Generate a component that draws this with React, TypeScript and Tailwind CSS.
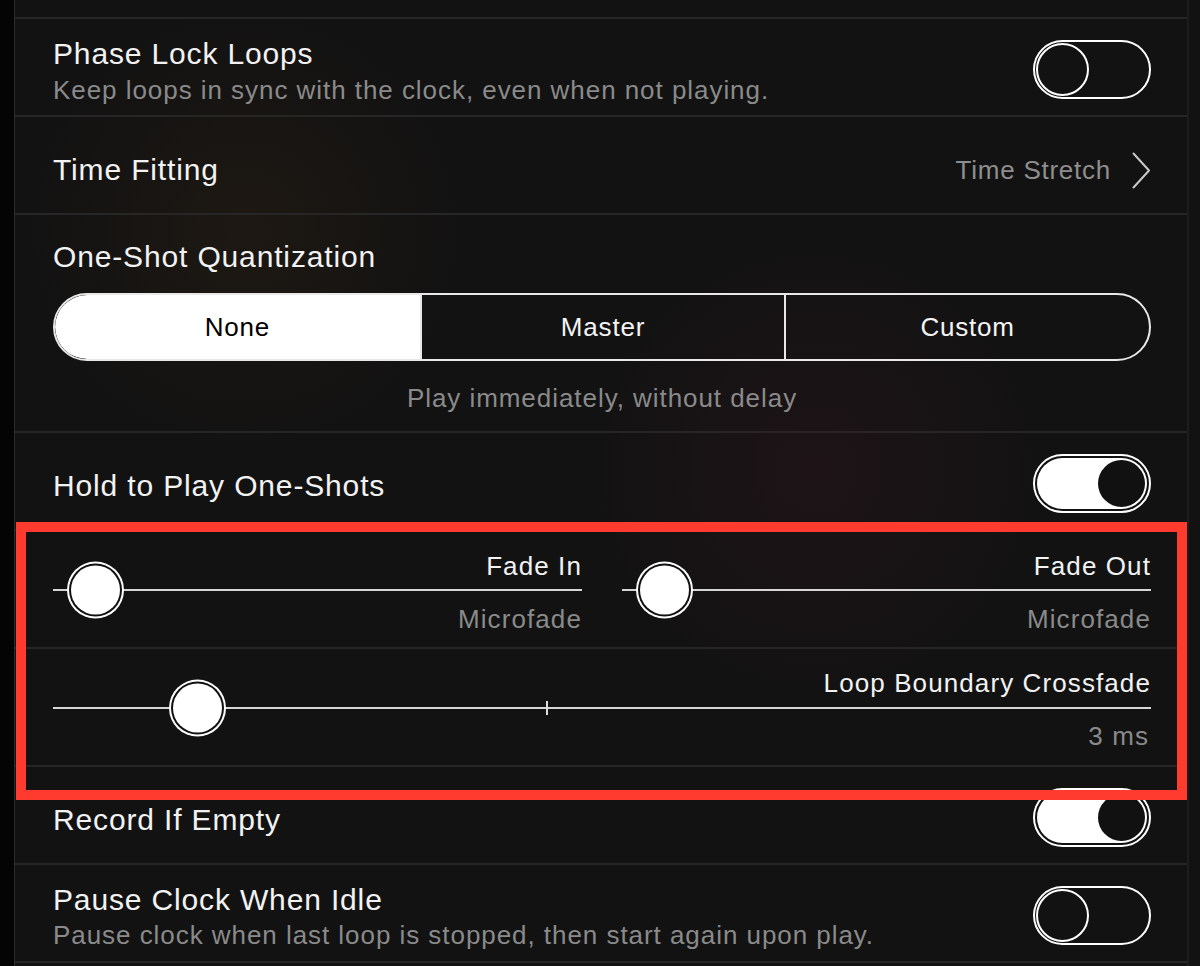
import React from "react";

const titleCls = "text-[30px] leading-[34px] tracking-[0.85px] text-[#f2f2f2] whitespace-nowrap";
const subCls = "text-[26px] leading-[30px] tracking-[0.95px] text-[#8a8a8a] whitespace-nowrap";
const labelCls = "text-right text-[26px] leading-[30px] tracking-[1.1px] text-[#f2f2f2] whitespace-nowrap";
const valueCls = "text-right text-[26px] leading-[30px] tracking-[1.1px] text-[#8a8a8a] whitespace-nowrap";

function ToggleOn() {
  return (
    <div className="w-[118px] h-[59px] rounded-full border-2 border-white p-[2px] shrink-0">
      <div className="h-full w-full rounded-full bg-white flex items-center justify-end p-[2px]">
        <div className="w-[47px] h-[47px] rounded-full bg-[#111111]" />
      </div>
    </div>
  );
}

function ToggleOff() {
  return (
    <div className="w-[118px] h-[59px] rounded-full border-2 border-white p-[1px] flex items-center shrink-0">
      <div className="w-[53px] h-[53px] rounded-full border-2 border-white" />
    </div>
  );
}

function Knob({ left }: { left: string }) {
  return (
    <div
      className={`absolute top-1/2 -translate-y-1/2 w-[57px] h-[57px] rounded-full bg-white p-[2px] ${left}`}
    >
      <div className="w-full h-full rounded-full bg-[#111111] p-[2px]">
        <div className="w-full h-full rounded-full bg-white" />
      </div>
    </div>
  );
}

function Chevron() {
  return (
    <svg width="19" height="37" viewBox="0 0 19 37" fill="none">
      <path d="M1.5 1.5 L17 18.5 L1.5 35.5" stroke="#c8c8c8" strokeWidth="2" strokeLinecap="round" strokeLinejoin="round" />
    </svg>
  );
}

export default function App() {
  return (
    <div className="relative w-[1200px] h-[966px] overflow-hidden bg-[#121212] flex font-['Liberation_Sans',Arial,sans-serif]">
      <div className="w-[14px] h-full bg-[#040404] shrink-0" />
      <div className="w-[1175px] h-full shrink-0 border-l border-r-2 border-l-[#2c2c2c] border-r-[#1d1d1d] bg-[radial-gradient(circle_at_230px_230px,rgba(70,45,20,0.22),transparent_220px),radial-gradient(circle_at_800px_470px,rgba(70,25,40,0.22),transparent_240px)] flex flex-col">
        {/* top partial row */}
        <div className="h-[19px] border-b-2 border-[#262626]" />

        {/* Phase Lock Loops */}
        <div className="h-[98px] border-b-2 border-[#262626] pl-[38px] pr-[36px] flex items-start justify-between">
          <div className="pt-[18px]">
            <div className={titleCls}>Phase Lock Loops</div>
            <div className={`${subCls} mt-[4px]`}>Keep loops in sync with the clock, even when not playing.</div>
          </div>
          <div className="mt-[21px]">
            <ToggleOff />
          </div>
        </div>

        {/* Time Fitting */}
        <div className="h-[98px] border-b-2 border-[#262626] pl-[38px] pr-[36px] flex items-start justify-between">
          <div className={`${titleCls} mt-[36px]`}>Time Fitting</div>
          <div className="mt-[36px] h-[34px] flex items-center gap-[21px]">
            <span className="text-[26px] leading-[34px] tracking-[0.75px] text-[#8e8e8e]">Time Stretch</span>
            <Chevron />
          </div>
        </div>

        {/* One-Shot Quantization */}
        <div className="h-[218px] border-b-2 border-[#262626] pl-[38px] pr-[36px] flex flex-col">
          <div className={`${titleCls} mt-[25px]`}>One-Shot Quantization</div>
          <div className="mt-[19px] h-[68px] rounded-full border-2 border-[#e8e8e8] grid grid-cols-3 overflow-hidden">
            <div className="bg-white rounded-l-full flex items-center justify-center text-[26px] tracking-[0.8px] text-black">
              None
            </div>
            <div className="border-l-2 border-[#e8e8e8] flex items-center justify-center text-[26px] tracking-[0.8px] text-[#f4f4f4]">
              Master
            </div>
            <div className="border-l-2 border-[#e8e8e8] flex items-center justify-center text-[26px] tracking-[0.8px] text-[#f4f4f4]">
              Custom
            </div>
          </div>
          <div className={`${subCls} mt-[22px] text-center`}>Play immediately, without delay</div>
        </div>

        {/* Hold to Play One-Shots */}
        <div className="h-[98px] border-b-2 border-[#262626] pl-[38px] pr-[36px] flex items-start justify-between">
          <div className={`${titleCls} mt-[36px]`}>Hold to Play One-Shots</div>
          <div className="mt-[21px]">
            <ToggleOn />
          </div>
        </div>

        {/* Fade In / Fade Out */}
        <div className="h-[118px] border-b-2 border-[#262626] pl-[38px] pr-[36px] grid grid-cols-2 gap-x-[40px]">
          <div className="pt-[20px]">
            <div className={labelCls}>Fade In</div>
            <div className="relative mt-[8px] h-[2px] bg-[#d6d6d6]">
              <Knob left="left-[14px]" />
            </div>
            <div className={`${valueCls} mt-[13px]`}>Microfade</div>
          </div>
          <div className="pt-[20px]">
            <div className={labelCls}>Fade Out</div>
            <div className="relative mt-[8px] h-[2px] bg-[#d6d6d6]">
              <Knob left="left-[14px]" />
            </div>
            <div className={`${valueCls} mt-[13px]`}>Microfade</div>
          </div>
        </div>

        {/* Loop Boundary Crossfade */}
        <div className="h-[118px] border-b-2 border-[#262626] pl-[38px] pr-[36px]">
          <div className="pt-[19px]">
            <div className={labelCls}>Loop Boundary Crossfade</div>
            <div className="relative mt-[9px] h-[2px] bg-[#d6d6d6]">
              <div className="absolute left-[493px] top-[-6px] w-[2px] h-[14px] bg-[#dcdcdc]" />
              <Knob left="left-[116px]" />
            </div>
            <div className={`${valueCls} mt-[12px] pr-[2px]`}>3 ms</div>
          </div>
        </div>

        {/* Record If Empty */}
        <div className="h-[98px] border-b-2 border-[#262626] pl-[38px] pr-[36px] flex items-start justify-between">
          <div className={`${titleCls} mt-[36px]`}>Record If Empty</div>
          <div className="mt-[21px]">
            <ToggleOn />
          </div>
        </div>

        {/* Pause Clock When Idle */}
        <div className="h-[98px] border-b-2 border-[#262626] pl-[38px] pr-[36px] flex items-start justify-between">
          <div className="pt-[18px]">
            <div className={titleCls}>Pause Clock When Idle</div>
            <div className={`${subCls} mt-[3px]`}>Pause clock when last loop is stopped, then start again upon play.</div>
          </div>
          <div className="mt-[21px]">
            <ToggleOff />
          </div>
        </div>
      </div>
      <div className="flex-1 h-full bg-[#121212]" />

      {/* red annotation box */}
      <div className="absolute left-[16px] top-[522px] w-[1171px] h-[278px] border-[10px] border-[#ff3b30] pointer-events-none" />
    </div>
  );
}
